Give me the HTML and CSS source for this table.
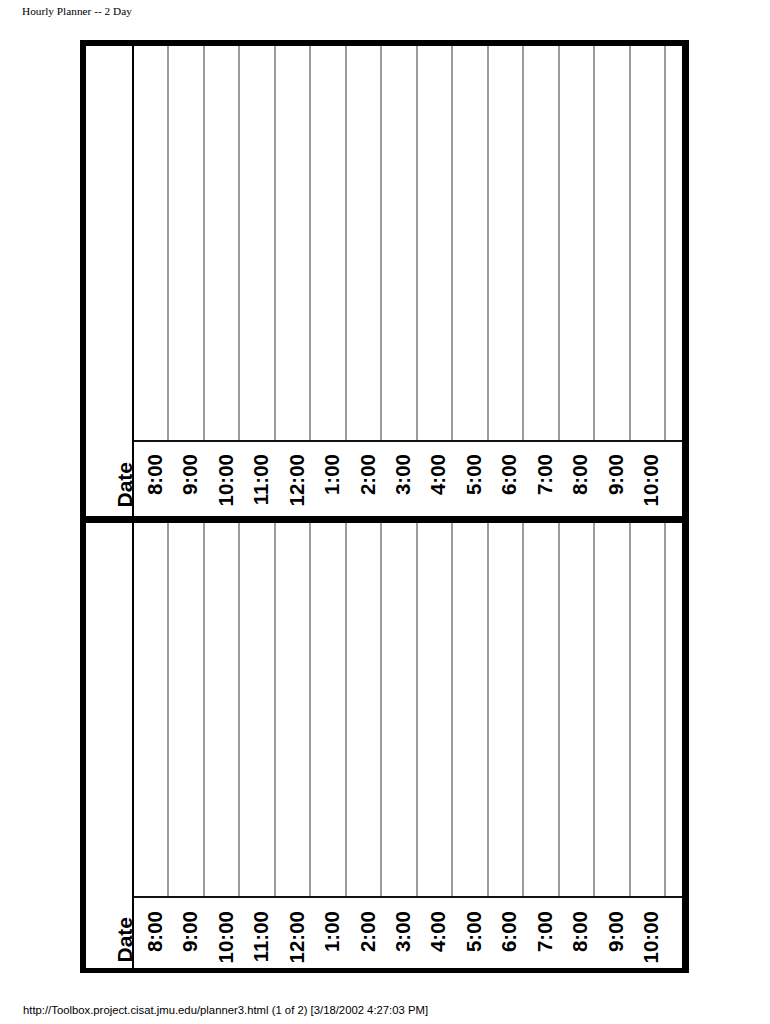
FILE: index.html
```html
<!DOCTYPE html>
<html>
<head>
<meta charset="utf-8">
<title>Hourly Planner -- 2 Day</title>
<link rel="stylesheet" href="styles.css">
</head>
<body>
<div class="title">Hourly Planner -- 2 Day</div>
<div class="frame">
  <div class="panel panel-top">
    <div class="datecol"><span class="date">Date</span></div>
    <div class="grid">
      <div class="writing">
        <div class="w"></div><div class="w"></div><div class="w"></div><div class="w"></div><div class="w"></div>
        <div class="w"></div><div class="w"></div><div class="w"></div><div class="w"></div><div class="w"></div>
        <div class="w"></div><div class="w"></div><div class="w"></div><div class="w"></div><div class="w"></div>
        <div class="w last"></div>
      </div>
      <div class="labels">
        <div class="l"><span class="t">8:00</span></div>
        <div class="l"><span class="t">9:00</span></div>
        <div class="l"><span class="t">10:00</span></div>
        <div class="l"><span class="t">11:00</span></div>
        <div class="l"><span class="t">12:00</span></div>
        <div class="l"><span class="t">1:00</span></div>
        <div class="l"><span class="t">2:00</span></div>
        <div class="l"><span class="t">3:00</span></div>
        <div class="l"><span class="t">4:00</span></div>
        <div class="l"><span class="t">5:00</span></div>
        <div class="l"><span class="t">6:00</span></div>
        <div class="l"><span class="t">7:00</span></div>
        <div class="l"><span class="t">8:00</span></div>
        <div class="l"><span class="t">9:00</span></div>
        <div class="l"><span class="t">10:00</span></div>
        <div class="l"></div>
      </div>
    </div>
  </div>
  <div class="panel panel-bottom">
    <div class="datecol"><span class="date">Date</span></div>
    <div class="grid">
      <div class="writing">
        <div class="w"></div><div class="w"></div><div class="w"></div><div class="w"></div><div class="w"></div>
        <div class="w"></div><div class="w"></div><div class="w"></div><div class="w"></div><div class="w"></div>
        <div class="w"></div><div class="w"></div><div class="w"></div><div class="w"></div><div class="w"></div>
        <div class="w last"></div>
      </div>
      <div class="labels">
        <div class="l"><span class="t">8:00</span></div>
        <div class="l"><span class="t">9:00</span></div>
        <div class="l"><span class="t">10:00</span></div>
        <div class="l"><span class="t">11:00</span></div>
        <div class="l"><span class="t">12:00</span></div>
        <div class="l"><span class="t">1:00</span></div>
        <div class="l"><span class="t">2:00</span></div>
        <div class="l"><span class="t">3:00</span></div>
        <div class="l"><span class="t">4:00</span></div>
        <div class="l"><span class="t">5:00</span></div>
        <div class="l"><span class="t">6:00</span></div>
        <div class="l"><span class="t">7:00</span></div>
        <div class="l"><span class="t">8:00</span></div>
        <div class="l"><span class="t">9:00</span></div>
        <div class="l"><span class="t">10:00</span></div>
        <div class="l"></div>
      </div>
    </div>
  </div>
</div>
<div class="footer">http://Toolbox.project.cisat.jmu.edu/planner3.html (1 of 2) [3/18/2002 4:27:03 PM]</div>
</body>
</html>
```

FILE: styles.css
```css
html, body {
  margin: 0;
  padding: 0;
  background: #fff;
  color: #000;
}

.title {
  box-sizing: border-box;
  height: 40px;
  padding: 5px 0 0 22px;
  font-family: "Liberation Serif", "Times New Roman", serif;
  font-size: 11.3px;
  line-height: 13px;
}

.frame {
  box-sizing: border-box;
  margin-left: 80px;
  width: 609px;
  border-style: solid;
  border-color: #000;
  border-width: 6px 7px 5px 6px;
}

.panel {
  display: flex;
}

.panel-top {
  height: 470px;
  border-bottom: 7px solid #000;
}

.panel-bottom {
  height: 445px;
}

.datecol {
  box-sizing: border-box;
  width: 48px;
  flex: none;
  border-right: 2px solid #000;
  display: flex;
  justify-content: flex-end;
  align-items: flex-end;
}

.panel-top .datecol {
  padding-bottom: 8px;
}

.panel-bottom .datecol {
  padding-bottom: 5px;
}

.date {
  writing-mode: vertical-rl;
  transform: rotate(180deg);
  font-family: "Liberation Sans", Arial, sans-serif;
  font-weight: bold;
  font-size: 21px;
  line-height: 21px;
  margin-right: -3px;
}

.grid {
  flex: 1;
  display: flex;
  flex-direction: column;
}

.writing {
  flex: 1;
  display: grid;
  grid-template-columns: repeat(15, 1fr) 16px;
}

.w {
  border-right: 2px solid #9c9c9c;
}

.w.last {
  border-right: none;
}

.labels {
  display: grid;
  grid-template-columns: repeat(15, 1fr) 16px;
  border-top: 2px solid #111;
}

.panel-top .labels {
  height: 74px;
}

.panel-bottom .labels {
  height: 70px;
}

.l {
  display: flex;
  justify-content: center;
  align-items: flex-start;
  padding-left: 6px;
}

.panel-top .l {
  padding-top: 12px;
}

.panel-bottom .l {
  padding-top: 13px;
}

.t {
  writing-mode: vertical-rl;
  transform: rotate(180deg);
  font-family: "Liberation Sans", Arial, sans-serif;
  font-weight: bold;
  font-size: 20.5px;
  line-height: 20px;
}

.footer {
  margin-top: 31px;
  padding-left: 23px;
  font-family: "Liberation Sans", Arial, sans-serif;
  font-size: 11.3px;
  line-height: 13px;
}
```
